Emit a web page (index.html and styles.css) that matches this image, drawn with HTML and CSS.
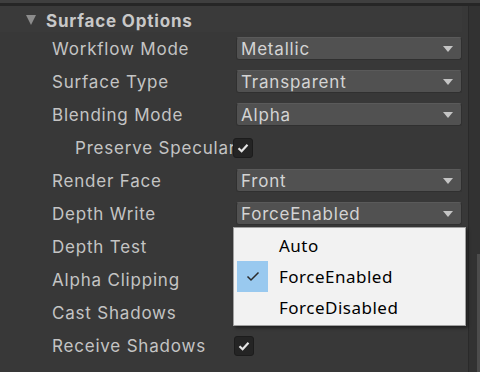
FILE: index.html
```html
<!DOCTYPE html>
<html lang="en">
<head>
    <meta charset="UTF-8">
    <title>Surface Options</title>
    <link rel="stylesheet" href="styles.css">
</head>
<body>
    <div class="top-strip"></div>
    <div class="inspector">
        <div class="panel">
            <div class="section-header">
                <span class="foldout"></span>
                <span class="section-title">Surface Options</span>
            </div>

            <div class="prop-row">
                <div class="prop-label">Workflow Mode</div>
                <div class="dropdown"><span>Metallic</span><span class="arrow"></span></div>
            </div>
            <div class="prop-row">
                <div class="prop-label">Surface Type</div>
                <div class="dropdown"><span>Transparent</span><span class="arrow"></span></div>
            </div>
            <div class="prop-row">
                <div class="prop-label">Blending Mode</div>
                <div class="dropdown"><span>Alpha</span><span class="arrow"></span></div>
            </div>
            <div class="prop-row">
                <div class="prop-label indent">Preserve Specular Lighting</div>
                <div class="toggle">
                    <svg width="12" height="10" viewBox="0 0 12 10"><path d="M1.5 5.2 L4.6 8.2 L10.5 1.8" fill="none" stroke="#e4e4e4" stroke-width="2.2"/></svg>
                </div>
            </div>
            <div class="prop-row">
                <div class="prop-label">Render Face</div>
                <div class="dropdown"><span>Front</span><span class="arrow"></span></div>
            </div>
            <div class="prop-row">
                <div class="prop-label">Depth Write</div>
                <div class="dropdown"><span>ForceEnabled</span><span class="arrow"></span></div>
            </div>
            <!-- fields below are covered by the popup -->
            <div class="prop-row">
                <div class="prop-label">Depth Test</div>
                <div class="dropdown"><span></span><span class="arrow"></span></div>
            </div>
            <div class="prop-row">
                <div class="prop-label">Alpha Clipping</div>
                <div class="toggle"></div>
            </div>
            <div class="prop-row">
                <div class="prop-label">Cast Shadows</div>
                <div class="toggle"></div>
            </div>
            <div class="prop-row">
                <div class="prop-label">Receive Shadows</div>
                <div class="toggle">
                    <svg width="12" height="10" viewBox="0 0 12 10"><path d="M1.5 5.2 L4.6 8.2 L10.5 1.8" fill="none" stroke="#e4e4e4" stroke-width="2.2"/></svg>
                </div>
            </div>
        </div>
        <div class="scrollbar"><div class="thumb"></div></div>
    </div>

    <!-- open popup for Depth Write -->
    <div class="popup-menu">
        <div class="menu-item"><span class="check-box"></span><span>Auto</span></div>
        <div class="menu-item"><span class="check-box selected">
            <svg width="14" height="11" viewBox="0 0 14 11"><path d="M1.5 5.5 L5 9 L12.5 1.5" fill="none" stroke="#2b2b2b" stroke-width="1.5"/></svg>
        </span><span>ForceEnabled</span></div>
        <div class="menu-item"><span class="check-box"></span><span>ForceDisabled</span></div>
    </div>
</body>
</html>
```

FILE: styles.css
```css
* {
    margin: 0;
    padding: 0;
    box-sizing: border-box;
}

body {
    width: 480px;
    height: 372px;
    overflow: hidden;
    background: #383838;
    font-family: Inter, 'Noto Sans', sans-serif;
    color: #c4c4c4;
    position: relative;
}

.top-strip {
    height: 6px;
    background: #3f3f3f;
    border-bottom: 3px solid #262626;
}

.inspector {
    display: flex;
}

.panel {
    flex: 1;
}

.section-header {
    height: 26px;
    display: flex;
    align-items: center;
    padding: 3px 0 0 26px;
    gap: 10px;
    background: #3a3a3a;
}

.foldout {
    width: 0;
    height: 0;
    margin-top: -1px;
    border-left: 5px solid transparent;
    border-right: 5px solid transparent;
    border-top: 10px solid #8c8c8c;
}

.section-title {
    font-size: 17px;
    font-weight: 700;
    letter-spacing: 0.8px;
    color: #c8c8c8;
}

.prop-row {
    height: 33px;
    display: flex;
    align-items: center;
}

.prop-label {
    width: 234px;
    padding-left: 52px;
    font-size: 17px;
    letter-spacing: 0.8px;
    white-space: nowrap;
    overflow: hidden;
    flex-shrink: 0;
}

.prop-label.indent {
    padding-left: 75px;
    width: 233px;
}

.dropdown {
    width: 226px;
    height: 23px;
    margin-left: 2px;
    background: #515151;
    border: 1px solid #303030;
    border-top-color: #5a5a5a;
    border-radius: 3px;
    display: flex;
    align-items: center;
    justify-content: space-between;
    padding: 0 8px 0 4px;
    font-size: 17px;
    letter-spacing: 0.8px;
    color: #d4d4d4;
}

.arrow {
    width: 0;
    height: 0;
    border-left: 5px solid transparent;
    border-right: 5px solid transparent;
    border-top: 6px solid #c4c4c4;
}

.toggle {
    width: 20px;
    height: 20px;
    margin-left: 0;
    background: #242424;
    border: 1px solid #1c1c1c;
    border-radius: 3px;
    display: flex;
    align-items: center;
    justify-content: center;
}

.scrollbar {
    width: 14px;
    height: 366px;
    margin-left: 6px;
    background: #323232;
    border-left: 1px solid #2a2a2a;
    padding-top: 248px;
    display: flex;
    justify-content: flex-end;
}

.thumb {
    width: 3px;
    height: 118px;
    background: #4c4c4c;
}

.popup-menu {
    position: absolute;
    left: 233px;
    top: 227px;
    width: 233px;
    height: 99px;
    background: #f2f2f2;
    border: 1px solid #a0a0a0;
    box-shadow: 2px 2px 3px rgba(0, 0, 0, 0.45);
    padding: 2px 0 0 3px;
    font-family: 'Noto Sans', 'Open Sans', sans-serif;
    font-size: 17px;
    letter-spacing: 0.5px;
    color: #000;
}

.menu-item {
    height: 31px;
    display: flex;
    align-items: center;
    gap: 11px;
}

.check-box {
    width: 31px;
    height: 31px;
    display: flex;
    align-items: center;
    justify-content: center;
}

.check-box.selected {
    background: #99c9ef;
}
```
